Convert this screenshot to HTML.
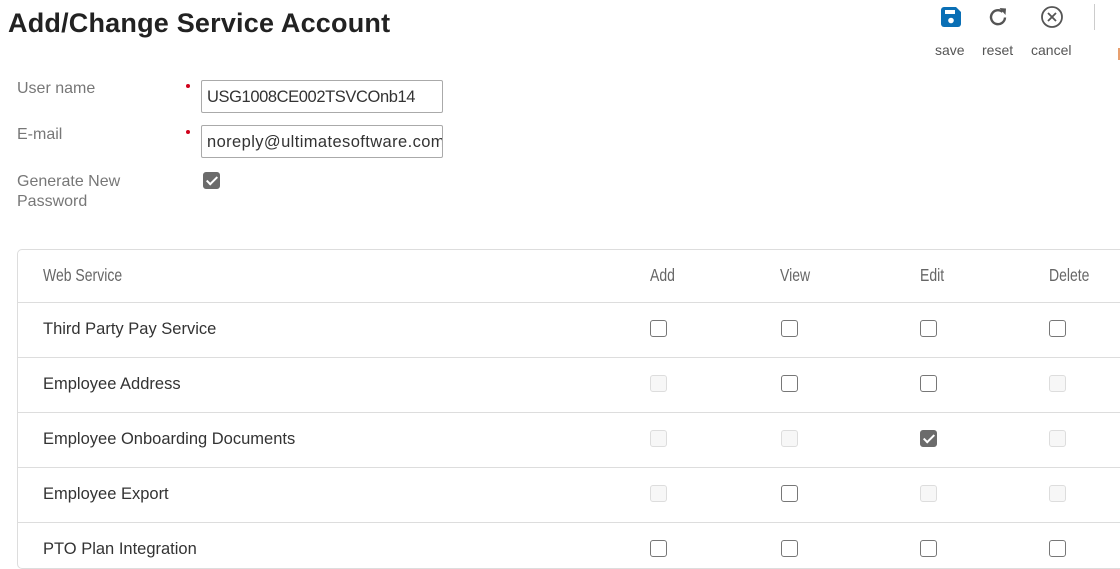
<!DOCTYPE html>
<html><head><meta charset="utf-8"><style>
*{margin:0;padding:0;box-sizing:border-box}
body{width:1120px;height:559px;overflow:hidden;background:#fff;font-family:"Liberation Sans","DejaVu Sans",sans-serif;position:relative;color:#333}
.a{position:absolute;white-space:nowrap}
h1{position:absolute;left:8px;top:8px;font-size:27px;font-weight:bold;color:#222;letter-spacing:0.2px}
.lbl{color:#777;font-size:16px}
.inp{position:absolute;left:201px;width:242px;height:33px;border:1px solid #aaa;border-radius:2px;font-size:16.5px;color:#333;padding:7px 5px;overflow:hidden;white-space:nowrap}
.req{position:absolute;left:186px;width:4px;height:4px;border-radius:2px;background:#d0021b}
.tbl{position:absolute;left:17px;top:249px;width:1120px;height:320px;border:1px solid #ddd;border-radius:5px}
.line{position:absolute;left:18px;width:1102px;height:1px;background:#ddd}
.hd{color:#666;font-size:17.5px;transform:scaleX(0.8);transform-origin:left}
.rw{color:#333;font-size:16.5px}
.cb{position:absolute;width:17px;height:17px;border:1.5px solid #777;border-radius:3px;background:#fff}
.cb.d{border:1px solid #ddd;background:#f7f7f7}
.cb.c{background:#6b6b6b;border-color:#6b6b6b}
.cb.c:after{content:"";position:absolute;left:5px;top:1px;width:4px;height:9px;border:solid #fff;border-width:0 2px 2px 0;transform:rotate(45deg)}
.tb{font-size:14px;color:#555}
</style></head><body>
<h1>Add/Change Service Account</h1>

<svg class="a" style="left:940px;top:6px" width="22" height="22" viewBox="0 0 22 22"><path d="M4 1h12l5 5v12a3 3 0 0 1-3 3H4a3 3 0 0 1-3-3V4a3 3 0 0 1 3-3z" fill="#0a6fb5"/><rect x="5" y="4" width="10" height="4" fill="#fff"/><circle cx="11" cy="14.5" r="2.8" fill="#fff"/></svg>
<svg class="a" style="left:986px;top:5px" width="24" height="24" viewBox="0 0 24 24"><path d="M19 12.5a7 7 0 1 1-2.4-5.6" fill="none" stroke="#555" stroke-width="2.4"/><path d="M13.5 3l6.5 0.5-0.5 6.5z" fill="#555"/></svg>
<svg class="a" style="left:1040px;top:5px" width="24" height="24" viewBox="0 0 24 24"><circle cx="12" cy="12" r="10" fill="none" stroke="#555" stroke-width="1.8"/><path d="M8 8l8 8M16 8l-8 8" stroke="#555" stroke-width="1.8"/></svg>
<div class="a" style="left:1094px;top:4px;width:1px;height:26px;background:#ccc"></div>
<div class="a tb" style="left:935px;top:42px">save</div>
<div class="a tb" style="left:982px;top:42px">reset</div>
<div class="a tb" style="left:1031px;top:42px">cancel</div>
<div class="a" style="left:1118px;top:48px;width:2px;height:12px;background:#e8a070"></div>

<div class="a lbl" style="left:17px;top:80px">User name</div>
<div class="req" style="top:84px"></div>
<div class="inp" style="top:80px;letter-spacing:-0.4px">USG1008CE002TSVCOnb14</div>
<div class="a lbl" style="left:17px;top:126px">E-mail</div>
<div class="req" style="top:130px"></div>
<div class="inp" style="top:125px;letter-spacing:0.4px">noreply@ultimatesoftware.com</div>
<div class="a lbl" style="left:17px;top:172px;line-height:20px">Generate New<br>Password</div>
<div class="cb c" style="left:203px;top:172px"></div>

<div class="tbl"></div>
<div class="a hd" style="left:43px;top:265px">Web Service</div>
<div class="a hd" style="left:650px;top:265px">Add</div>
<div class="a hd" style="left:780px;top:265px">View</div>
<div class="a hd" style="left:920px;top:265px">Edit</div>
<div class="a hd" style="left:1049px;top:265px">Delete</div>
<div class="line" style="top:302px"></div>
<div class="line" style="top:357px"></div>
<div class="line" style="top:412px"></div>
<div class="line" style="top:467px"></div>
<div class="line" style="top:522px"></div>

<div class="a rw" style="left:43px;top:320px">Third Party Pay Service</div>
<div class="a rw" style="left:43px;top:375px">Employee Address</div>
<div class="a rw" style="left:43px;top:430px">Employee Onboarding Documents</div>
<div class="a rw" style="left:43px;top:485px">Employee Export</div>
<div class="a rw" style="left:43px;top:540px">PTO Plan Integration</div>

<div class="cb" style="left:650px;top:320px"></div><div class="cb" style="left:781px;top:320px"></div><div class="cb" style="left:920px;top:320px"></div><div class="cb" style="left:1049px;top:320px"></div>
<div class="cb d" style="left:650px;top:375px"></div><div class="cb" style="left:781px;top:375px"></div><div class="cb" style="left:920px;top:375px"></div><div class="cb d" style="left:1049px;top:375px"></div>
<div class="cb d" style="left:650px;top:430px"></div><div class="cb d" style="left:781px;top:430px"></div><div class="cb c" style="left:920px;top:430px"></div><div class="cb d" style="left:1049px;top:430px"></div>
<div class="cb d" style="left:650px;top:485px"></div><div class="cb" style="left:781px;top:485px"></div><div class="cb d" style="left:920px;top:485px"></div><div class="cb d" style="left:1049px;top:485px"></div>
<div class="cb" style="left:650px;top:540px"></div><div class="cb" style="left:781px;top:540px"></div><div class="cb" style="left:920px;top:540px"></div><div class="cb" style="left:1049px;top:540px"></div>
</body></html>
